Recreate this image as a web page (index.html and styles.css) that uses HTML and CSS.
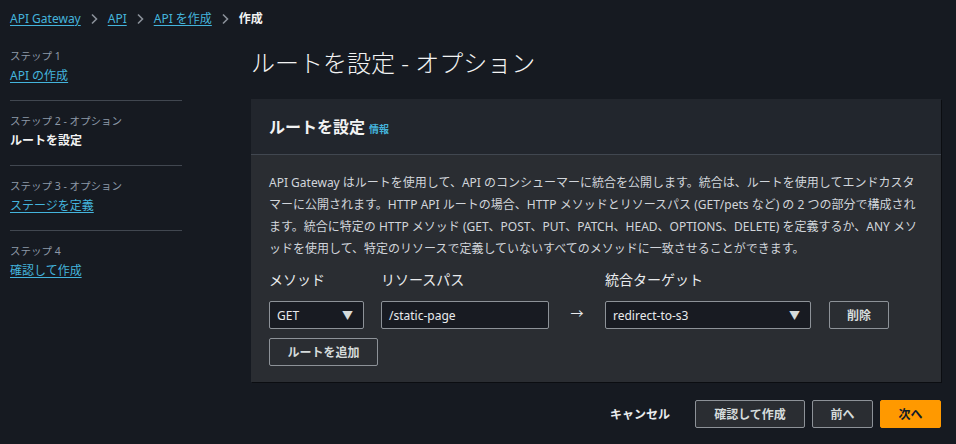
FILE: index.html
```html
<!DOCTYPE html>
<html lang="ja">
<head>
<meta charset="utf-8">
<title>ルートを設定</title>
<link rel="stylesheet" href="styles.css">
</head>
<body>
<nav class="crumbs">
  <a class="link" href="#">API Gateway</a>
  <svg class="chev" viewBox="0 0 8 12" width="8" height="12"><path d="M2 1.5 L6.5 6 L2 10.5" fill="none" stroke="#8a9099" stroke-width="1.6"/></svg>
  <a class="link" href="#">API</a>
  <svg class="chev" viewBox="0 0 8 12" width="8" height="12"><path d="M2 1.5 L6.5 6 L2 10.5" fill="none" stroke="#8a9099" stroke-width="1.6"/></svg>
  <a class="link" href="#">API を作成</a>
  <svg class="chev" viewBox="0 0 8 12" width="8" height="12"><path d="M2 1.5 L6.5 6 L2 10.5" fill="none" stroke="#8a9099" stroke-width="1.6"/></svg>
  <span class="current">作成</span>
</nav>
<div class="main">
  <aside class="steps">
    <div class="step">
      <div class="step-label">ステップ 1</div>
      <a class="step-name link" href="#">API の作成</a>
    </div>
    <div class="step">
      <div class="step-label">ステップ 2 - オプション</div>
      <div class="step-name active">ルートを設定</div>
    </div>
    <div class="step">
      <div class="step-label">ステップ 3 - オプション</div>
      <a class="step-name link" href="#">ステージを定義</a>
    </div>
    <div class="step last">
      <div class="step-label">ステップ 4</div>
      <a class="step-name link" href="#">確認して作成</a>
    </div>
  </aside>
  <section class="content">
    <h1 class="title">ルートを設定 - オプション</h1>
    <div class="card">
      <div class="card-head">
        <h2 class="card-title">ルートを設定</h2>
        <a class="info link" href="#">情報</a>
      </div>
      <div class="card-body">
        <p class="desc">API Gateway はルートを使用して、API のコンシューマーに統合を公開します。統合は、ルートを使用してエンドカスタマーに公開されます。HTTP API ルートの場合、HTTP メソッドとリソースパス (GET/pets など) の 2 つの部分で構成されます。統合に特定の HTTP メソッド (GET、POST、PUT、PATCH、HEAD、OPTIONS、DELETE) を定義するか、ANY メソッドを使用して、特定のリソースで定義していないすべてのメソッドに一致させることができます。</p>
        <div class="route-grid">
          <div class="label">メソッド</div>
          <div class="label">リソースパス</div>
          <div></div>
          <div class="label">統合ターゲット</div>
          <div></div>
          <div class="select method"><span>GET</span><span class="tri">▼</span></div>
          <div class="input path">/static-page</div>
          <div class="arrow">→</div>
          <div class="select target"><span>redirect-to-s3</span><span class="tri">▼</span></div>
          <button class="btn del">削除</button>
        </div>
        <button class="btn add">ルートを追加</button>
      </div>
    </div>
    <div class="footer">
      <button class="cancel">キャンセル</button>
      <button class="btn fbtn review">確認して作成</button>
      <button class="btn fbtn prev">前へ</button>
      <button class="btn fbtn next">次へ</button>
    </div>
  </section>
</div>
</body>
</html>
```

FILE: styles.css
```css
* { box-sizing: border-box; }
html, body { margin: 0; padding: 0; }
body {
  background: #161a21;
  color: #d1d5db;
  font-family: "Noto Sans", "Noto Sans CJK JP", sans-serif;
  width: 956px;
  height: 444px;
  overflow: hidden;
}
.link { color: #44b4dc; text-decoration: underline; text-underline-offset: 2px; }

.crumbs {
  height: 43px;
  display: flex;
  align-items: flex-start;
  padding: 9px 10px 0;
  font-size: 12px;
  line-height: 20px;
}
.crumbs .chev { margin: 4px 10px 0 9px; }
.crumbs .current { color: #f2f3f3; font-weight: 700; }

.main { display: flex; }
.steps { width: 172px; margin-left: 10px; }
.step {
  padding: 12px 0 15px;
  border-bottom: 1px solid #414750;
}
.step:first-child { padding-top: 5px; }
.step.last { border-bottom: none; }
.step-label {
  font-size: 10.5px;
  line-height: 16px;
  height: 16px;
  color: #8d99a8;
}
.step-name {
  display: block;
  width: fit-content;
  margin-top: 3px;
  font-size: 12px;
  line-height: 18px;
  height: 18px;
}
.step-name.active { color: #f2f3f3; font-weight: 700; }

.content { margin-left: 69px; width: 690px; }
.title {
  margin: 4px 0 20px;
  font-size: 24px;
  line-height: 32px;
  font-weight: 300;
  color: #f2f3f3;
}
.card {
  background: #2a2d32;
  box-shadow: 1px 1px 0 #0b0d11;
}
.card-head {
  height: 56px;
  background: #22262d;
  border-bottom: 1px solid #414750;
  display: flex;
  align-items: center;
  padding: 0 18px;
  gap: 4px;
}
.card-title {
  margin: 0;
  font-size: 16px;
  font-weight: 700;
  color: #f2f3f3;
  line-height: 20px;
}
.info { font-size: 10px; font-weight: 700; text-decoration: none; margin-top: 3px; }
.card-body { padding: 17px 18px 16px; }
.desc {
  margin: 0 0 10px;
  font-size: 12px;
  line-height: 22px;
  height: 88px;
  color: #d1d5db;
  width: 656px;
}
.route-grid {
  display: grid;
  grid-template-columns: 112px 168px 56px 224px 60px;
  grid-template-rows: 20px 28px;
  row-gap: 11px;
  align-items: center;
}
.label { font-size: 14px; line-height: 20px; color: #e9ebed; }
.select, .input {
  height: 28px;
  border: 1px solid #8d9298;
  border-radius: 2px;
  background: #181b22;
  display: flex;
  align-items: center;
  justify-content: space-between;
  padding: 0 10px 0 7px;
  font-size: 12px;
  color: #e9ebed;
}
.method { width: 95px; }
.path { width: 168px; }
.target { width: 206px; }
.tri { font-size: 11px; color: #d5dbdb; }
.arrow { text-align: center; font-size: 13px; color: #e9ebed; margin-top: -5px; }

.btn {
  height: 28px;
  border: 1px solid #8d9298;
  border-radius: 2px;
  background: transparent;
  color: #d5dbdb;
  font-family: inherit;
  font-size: 12px;
  font-weight: 700;
  padding: 0;
  cursor: pointer;
}
.del { width: 60px; }
.add { width: 109px; margin-top: 9px; display: block; }

.footer {
  display: flex;
  justify-content: flex-end;
  align-items: center;
  gap: 7px;
  margin-top: 18px;
}
.cancel {
  background: none;
  border: none;
  color: #e9ebed;
  font-family: inherit;
  font-size: 12px;
  font-weight: 700;
  margin-right: 18px;
  padding: 0;
}
.fbtn { background: #2a2d32; }
.review { width: 110px; }
.prev { width: 61px; }
.next { width: 61px; background: #ff9900; border-color: #ff9900; color: #0f1b2a; }
```
